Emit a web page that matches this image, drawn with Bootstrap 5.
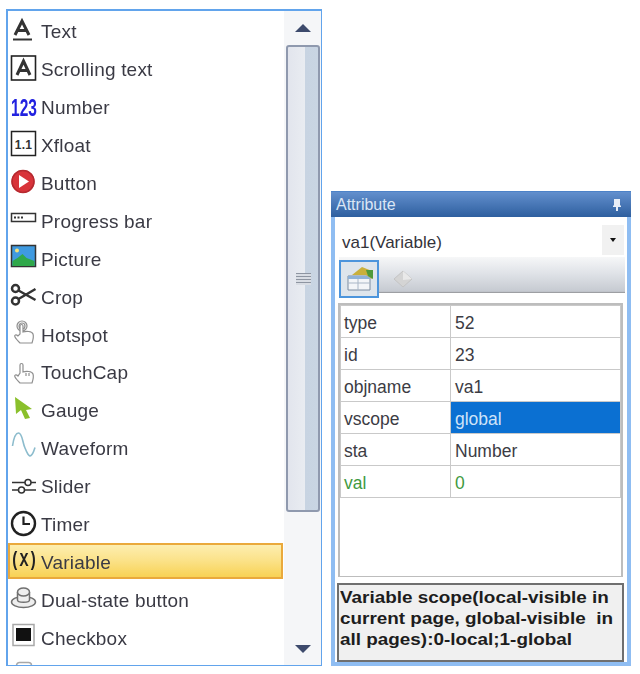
<!DOCTYPE html>
<html lang="en">
<head>
  <meta charset="UTF-8">
  <title>Toolbox</title>
  <link href="https://cdn.jsdelivr.net/npm/bootstrap@5.3.0/dist/css/bootstrap.min.css" rel="stylesheet">
  <style>
    html, body { height: 100%; }
    body { background: #fff; overflow: hidden; font-family: "Liberation Sans", Arial, sans-serif; color: #3a3a44; }
    .page-wrap { padding: 9px 0 0 6px; height: 674px; filter: blur(.6px); }

    .tool-panel { width: 316px; height: 657px; border: 2px solid #62a4ec; border-right-width: 1px; border-bottom-width: 1px; overflow: hidden; }
    .tool-list { width: 276px; padding-top: 2px; overflow: hidden; }
    .tool-row { height: 37.9px; width: 275px; padding-left: 2px; font-size: 19px; letter-spacing: .2px; line-height: 1; flex-shrink: 0; }
    .tool-row svg, .tool-glyph { width: 28px; height: 28px; margin-right: 3px; flex-shrink: 0; overflow: visible; }
    .tool-row.active-row { background: linear-gradient(#fdeeb0, #fbe38c 45%, #f8d255); border: 2px solid #eaa93c; height: 36px; margin-bottom: 1.900px; padding: 3px 0 0 0; }
    .tool-glyph { line-height: 28px; letter-spacing: 0; text-align: center; white-space: nowrap; }
    .glyph-num { color: #2222e0; font-size: 15.500px; font-weight: 700; transform: scaleY(1.5); }
    .glyph-var { color: #222; font-family: "Liberation Mono", monospace; font-weight: 700; font-size: 15px; transform: scaleY(1.4); margin-top: -1px; }

    .scroll-rail { width: 37px; background: #f5f6f8; padding: 0 1px 0 2px; }
    .scroll-btn { height: 34px; }
    .scroll-arrow { width: 0; height: 0; border-left: 8px solid transparent; border-right: 8px solid transparent; }
    .arrow-up { border-bottom: 8px solid #3d4a6c; }
    .arrow-down { border-top: 8px solid #3d4a6c; }
    .scroll-thumb { height: 467px; border: 2px solid #8f99ae; border-radius: 3px; background: linear-gradient(90deg, #e2e5ed, #e9ecf1 55%, #c8d4e2 58%, #c9d5e3); }
    .thumb-grip { width: 15px; height: 12px; background: repeating-linear-gradient(#8e95a1 0 1px, #d9dde4 1px 3px); }

    .attr-panel { width: 300px; height: 475px; margin: 182px 0 0 9px; border: 4px solid #8fbdf2; border-top: 0; background: #fff; }
    .attr-head { height: 26px; margin: 0 -4px; padding: 0 9px 0 5px; background: linear-gradient(#628fcd, #2e5f9f); color: #dbe6f5; font-size: 16px; border-top: 1px solid #4c82c8; }
    .attr-combo { height: 32px; margin-top: 7px; padding: 0 3px 0 7px; font-size: 17px; color: #33333b; }
    .attr-combo span { padding-top: 5px; }
    .combo-btn { width: 22px; height: 30px; background: #f1f1f1; }
    .combo-caret { width: 0; height: 0; border-left: 3px solid transparent; border-right: 3px solid transparent; border-top: 4px solid #111; }
    .attr-tools { height: 42px; margin: 1px 2px 0 4px; background: linear-gradient(#f6f7f8 0, #dfe2e7 40%, #c6cad1 82%, #9d9fa3 83%, #9d9fa3 85%, #fff 86%); }
    .tool-pressed { width: 40px; height: 38px; margin-top: 3px; border: 2px solid #4d95dc; background: #dee5ec; }
    .tool-dim { margin: 10px 0 0 13px; }
    .attr-grid-wrap { height: 274px; margin: 4px 4px 0 3px; border: 2px solid #bdbdbd; border-bottom-width: 1px; }
    .attr-table { margin: 0; font-size: 17.500px; color: #3c3c44; }
    .attr-table td { height: 32px; padding: 3px 3px 0; border: 1px solid #c9c9c9; vertical-align: middle; }
    .attr-table td:first-child { width: 110px; }
    .attr-table td:last-child { padding-left: 4px; }
    .attr-table .cell-picked { background: #0b70d2; color: #cfe3f8; }
    .attr-table .row-green td { color: #3f9a3f; }
    .attr-note { height: 79px; margin: 6px 3px 0 2px; padding: 2px 1px; border: 2px solid #6f6f6f; background: #f0f0f0; color: #1d1d1d; font-size: 16.500px; font-weight: 700; line-height: 21px; white-space: nowrap; overflow: hidden; }
    .note-text { transform: scaleX(1.145); transform-origin: left top; }
  </style>
</head>
<body>
<div class="page-wrap d-flex align-items-start">

  <div class="tool-panel d-flex">
    <div class="tool-list d-flex flex-column">
      <div class="tool-row d-flex align-items-center">
        <svg viewBox="0 0 28 28"><path d="M5 17 12 3l7 14M7.500 12.500h9" fill="none" stroke="#333" stroke-width="3"/><path d="M3 21.500h19" stroke="#333" stroke-width="2"/></svg>Text</div>
      <div class="tool-row d-flex align-items-center">
        <svg viewBox="0 0 28 28"><rect x="1.500" y="0" width="24" height="24" fill="#fff" stroke="#222" stroke-width="1.600"/><path d="M7 19 13.500 5 20 19M9 14.500h9" fill="none" stroke="#333" stroke-width="3"/></svg>Scrolling text</div>
      <div class="tool-row d-flex align-items-center">
        <span class="tool-glyph glyph-num">123</span>Number</div>
      <div class="tool-row d-flex align-items-center">
        <svg viewBox="0 0 28 28"><rect x="1.500" y="-.5" width="24" height="24" fill="#fff" stroke="#222" stroke-width="1.500"/><text x="13.500" y="16.500" text-anchor="middle" font-family="Liberation Sans" font-weight="700" font-size="12" fill="#333">1.1</text></svg>Xfloat</div>
      <div class="tool-row d-flex align-items-center">
        <svg viewBox="0 0 28 28"><circle cx="13" cy="11.500" r="11.500" fill="#d8343a"/><circle cx="13" cy="11.500" r="11" fill="none" stroke="#b52a30" stroke-width="1.500"/><path d="M9 5 19 11.500 9 18z" fill="#fff"/></svg>Button</div>
      <div class="tool-row d-flex align-items-center">
        <svg viewBox="0 0 28 28"><rect x="1.500" y="6.500" width="24" height="8" fill="#fff" stroke="#333" stroke-width="1.500"/><path d="M4 10.500h2M7.500 10.500h2M11 10.500h2" stroke="#333" stroke-width="2"/></svg>Progress bar</div>
      <div class="tool-row d-flex align-items-center">
        <svg viewBox="0 0 28 28"><rect x="1.500" y=".5" width="24" height="21" fill="#3f9ae0" stroke="#333" stroke-width="1.500"/><circle cx="7" cy="5.500" r="2" fill="#f4e27a"/><path d="M2.500 21v-5l5-3 5-4 4 4 8 3v5z" fill="#2fa84a"/></svg>Picture</div>
      <div class="tool-row d-flex align-items-center">
        <svg viewBox="0 0 28 28"><g fill="none" stroke="#333" stroke-width="2.500"><circle cx="5.500" cy="5.500" r="3.500"/><circle cx="5.500" cy="18" r="3.500"/><path d="M8.500 7.500 25.500 17M8.500 16 25.500 6"/></g></svg>Crop</div>
      <div class="tool-row d-flex align-items-center">
        <svg viewBox="0 0 28 28"><g fill="none" stroke="#8f8f8f" stroke-width="1.200"><circle cx="12" cy="5" r="5"/><circle cx="12" cy="5" r="3"/><path d="M10 13V5c0-2 3-2 3 0v6c3-1 9-1 10 2 1 3 0 6-1 9H10c-2-2-4-4-5-6-1-2 1-3 3-1z" fill="#fff"/></g></svg>Hotspot</div>
      <div class="tool-row d-flex align-items-center">
        <svg viewBox="0 0 28 28"><path d="M10 14V6c0-2 3-2 3 0v7c3-1 9-1 10 2 1 3 0 6-1 9H10c-2-2-4-4-5-6-1-2 1-3 3-1zM16 14v3M19 14v3" fill="#fff" stroke="#8f8f8f" stroke-width="1.200"/></svg>TouchCap</div>
      <div class="tool-row d-flex align-items-center">
        <svg viewBox="0 0 28 28"><path d="M5 0 22 12l-6 1 4 8-5 1-4-9-5 4z" fill="#8ac02c"/></svg>Gauge</div>
      <div class="tool-row d-flex align-items-center">
        <svg viewBox="0 0 28 28"><path d="M2.500 11C4 1 6-2 8.500-2c4 0 4 10 6.500 15 2 5 4 9 6 7.500 2-1 3-5 4-8" fill="none" stroke="#8cbccd" stroke-width="1.600"/></svg>Waveform</div>
      <div class="tool-row d-flex align-items-center">
        <svg viewBox="0 0 28 28"><g fill="none" stroke="#333" stroke-width="1.500"><path d="M2 9.500h13M21 9.500h5M2 17h6.500M14.500 17H26"/><circle cx="18" cy="9.500" r="3"/><circle cx="11.500" cy="17" r="3"/></g></svg>Slider</div>
      <div class="tool-row d-flex align-items-center">
        <svg viewBox="0 0 28 28"><circle cx="13.500" cy="12.500" r="11.500" fill="#fff" stroke="#222" stroke-width="2.400"/><path d="M13.500 5.500V13H20" fill="none" stroke="#222" stroke-width="2.200"/></svg>Timer</div>
      <div class="tool-row d-flex align-items-center active-row">
        <span class="tool-glyph glyph-var">(X)</span>Variable</div>
      <div class="tool-row d-flex align-items-center">
        <svg viewBox="0 0 28 28"><g fill="#eee" stroke="#707070" stroke-width="1.500"><ellipse cx="13.500" cy="16" rx="12" ry="5.500"/><path d="M7.500 6v8c0 3 12 3 12 0V6"/><ellipse cx="13.500" cy="6" rx="6" ry="4"/></g></svg>Dual-state button</div>
      <div class="tool-row d-flex align-items-center">
        <svg viewBox="0 0 28 28"><rect x="3" y=".5" width="21" height="21" fill="#fff" stroke="#a8a8a8" stroke-width="1.500"/><rect x="6" y="4" width="15" height="13" fill="#111"/></svg>Checkbox</div>
      <div class="tool-row d-flex align-items-center">
        <svg viewBox="0 0 28 28"><rect x="6.500" y=".5" width="15" height="20" rx="3" fill="#fff" stroke="#a8a8a8" stroke-width="1.500"/></svg></div>
    </div>
    <div class="scroll-rail d-flex flex-column">
      <div class="scroll-btn d-flex align-items-center justify-content-center"><div class="scroll-arrow arrow-up"></div></div>
      <div class="scroll-thumb d-flex align-items-center justify-content-center"><div class="thumb-grip"></div></div>
      <div class="flex-grow-1 d-flex align-items-end justify-content-center pb-2"><div class="scroll-arrow arrow-down mb-1"></div></div>
    </div>
  </div>

  <div class="attr-panel">
    <div class="attr-head d-flex align-items-center justify-content-between">
      <span>Attribute</span>
      <svg width="10" height="14" viewBox="0 0 10 14"><path d="M2 1h6v6l1 1v1H6v4H4V9H1V8l1-1z" fill="#e8eef7"/></svg>
    </div>
    <div class="attr-combo d-flex align-items-center justify-content-between">
      <span>va1(Variable)</span>
      <div class="combo-btn d-flex align-items-center justify-content-center"><div class="combo-caret"></div></div>
    </div>
    <div class="attr-tools d-flex">
      <div class="tool-pressed d-flex align-items-center justify-content-center">
        <svg width="30" height="28" viewBox="0 0 30 28"><path d="M4 11h22v14H4z" fill="#f3f5f8" stroke="#7d8ca0"/><path d="M4 11h22v3H4z" fill="#8fb2d8"/><path d="M4 18h22M14 14v11" stroke="#a9b6c6"/><path d="M8 10 18 2l10 4v8l-6-4z" fill="#c9b03c"/><path d="M22 5h7v9l-5-3z" fill="#4f9a3c"/></svg>
      </div>
      <svg class="tool-dim" width="22" height="24" viewBox="0 0 22 24"><path d="M11 4 20 12 11 20 2 12z" fill="#d4d4d4" stroke="#c4c4c4"/><path d="M11 4 20 12 11 13z" fill="#e9e9e9"/></svg>
    </div>
    <div class="attr-grid-wrap">
      <table class="table attr-table">
        <tbody>
          <tr><td>type</td><td>52</td></tr>
          <tr><td>id</td><td>23</td></tr>
          <tr><td>objname</td><td>va1</td></tr>
          <tr><td>vscope</td><td class="cell-picked">global</td></tr>
          <tr><td>sta</td><td>Number</td></tr>
          <tr class="row-green"><td>val</td><td>0</td></tr>
        </tbody>
      </table>
    </div>
    <div class="attr-note"><div class="note-text">Variable scope(local-visible in<br>current page, global-visible &nbsp;in<br>all pages):0-local;1-global</div></div>
  </div>

</div>
<script src="https://cdn.jsdelivr.net/npm/bootstrap@5.3.0/dist/js/bootstrap.bundle.min.js"></script>
</body>
</html>
